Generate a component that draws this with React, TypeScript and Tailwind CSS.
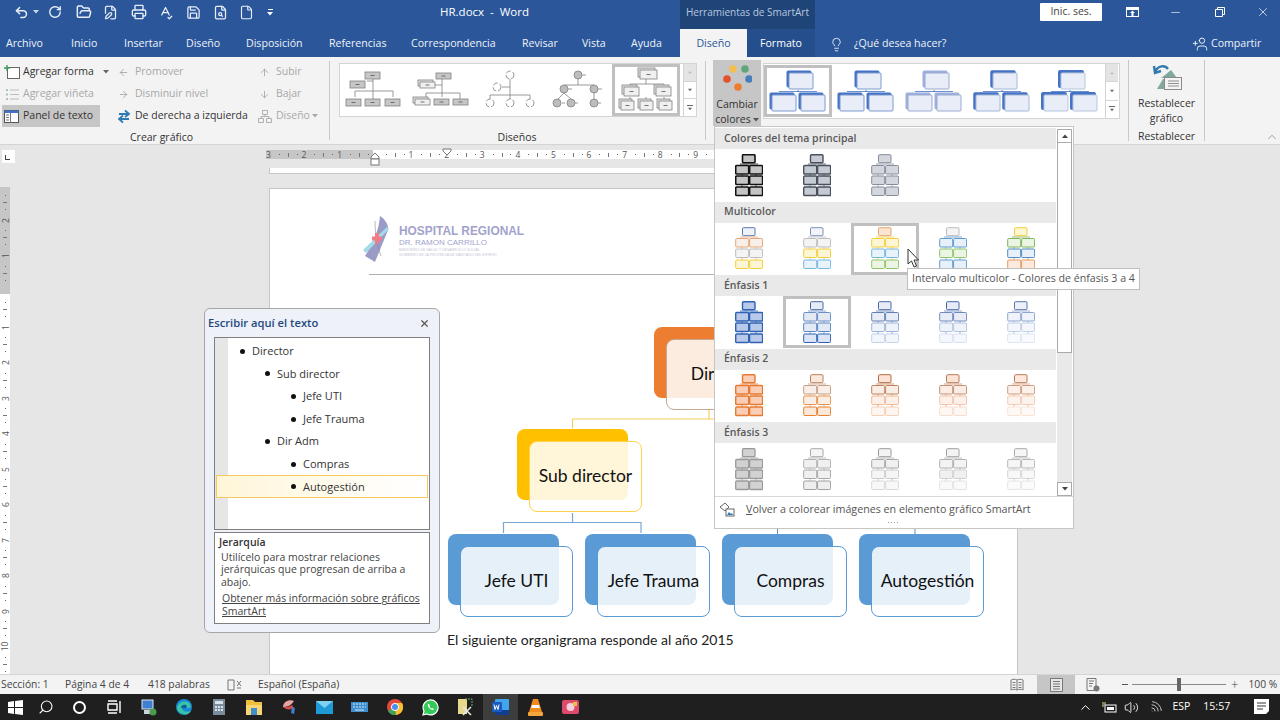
import {
  Undo2,
  RotateCcw,
  FolderOpen,
  FilePen,
  Printer,
  SpellCheck,
  Save,
  FileSearch,
  File,
  Minus,
  X,
  Lightbulb,
  UserPlus,
  ArrowLeft,
  ArrowRight,
  ArrowUp,
  ArrowDown,
  ChevronUp,
  Search,
  Volume2,
  Wifi,
} from "lucide-react";

const ui = "font-['Open_Sans','Noto_Sans',sans-serif]";

const Caret = ({ className = "" }: { className?: string }) => (
  <svg width="6" height="4" viewBox="0 0 6 4" className={className}>
    <path d="M0 0h6L3 3.500z" fill="currentColor" />
  </svg>
);

/* ---------- title bar ---------- */
const TitleBar = () => (
  <div className="h-[29px] flex items-start bg-[#2b579a] text-white shrink-0">
    <div className="w-[440px] h-[24px] flex items-center shrink-0 pl-[14px] text-[#e8eef7]">
      <Undo2 size={15} strokeWidth={2.4} />
      <Caret className="ml-[4px] text-[#c8d6ea]" />
      <RotateCcw size={14} strokeWidth={2.4} className="ml-[9px] scale-x-[-1]" />
      <FolderOpen size={16} strokeWidth={2.2} className="ml-[14px]" />
      <FilePen size={15} strokeWidth={2} className="ml-[11px]" />
      <Printer size={16} strokeWidth={2} className="ml-[13px]" />
      <SpellCheck size={15} strokeWidth={2} className="ml-[11px]" />
      <Save size={15} strokeWidth={2} className="ml-[13px]" />
      <FileSearch size={15} strokeWidth={2} className="ml-[12px]" />
      <File size={15} strokeWidth={1.8} className="ml-[11px]" />
      <div className="ml-[13px] flex flex-col items-center gap-[2px]">
        <div className="w-[5px] h-[1px] bg-white" />
        <Caret className="text-white" />
      </div>
    </div>
    <div className="w-[240px] h-[24px] flex items-center text-[11.5px] text-white shrink-0">HR.docx&nbsp; -&nbsp; Word</div>
    <div className="w-[135px] h-[29px] pb-[5px] bg-[#1f4478] text-[#b8c8de] text-[10px] flex items-center justify-center shrink-0">
      Herramientas de SmartArt
    </div>
    <div className="ml-[225px] mt-[3px] w-[62px] h-[18px] bg-white rounded-[1px] text-[#444] text-[10.500px] flex items-center justify-center">
      Inic. ses.
    </div>
    <div className="h-[24px] flex items-center">
      <svg width="13" height="10" viewBox="0 0 13 10" className="ml-[24px]">
        <rect x="0.5" y="0.5" width="12" height="9" fill="none" stroke="white" />
        <rect x="0.5" y="0.5" width="12" height="2.5" fill="white" />
        <path d="M6.500 3.500l2.500 2.500H7.500V9h-2V6H4z" fill="white" />
      </svg>
      <Minus size={13} strokeWidth={1.2} className="ml-[30px]" />
      <svg width="10" height="10" viewBox="0 0 10 10" className="ml-[33px]">
        <path d="M0.5 2.500h7v7h-7zM2.500 2.500v-2h7v7h-2" fill="none" stroke="white" />
      </svg>
      <X size={14} strokeWidth={1.2} className="ml-[31px]" />
    </div>
  </div>
);

/* ---------- tabs ---------- */
const tabs = [
  { label: "Archivo", w: "w-[65px]" },
  { label: "Inicio", w: "w-[53px]" },
  { label: "Insertar", w: "w-[62px]" },
  { label: "Diseño", w: "w-[60px]" },
  { label: "Disposición", w: "w-[83px]" },
  { label: "Referencias", w: "w-[82px]" },
  { label: "Correspondencia", w: "w-[111px]" },
  { label: "Revisar", w: "w-[60px]" },
  { label: "Vista", w: "w-[49px]" },
  { label: "Ayuda", w: "w-[49px]" },
];

const TabRow = () => (
  <div className="h-[28px] flex items-center bg-[#2b579a] text-[#eef2f8] text-[10.600px] pl-[6px] pt-[2px] shrink-0">
    {tabs.map((t) => (
      <div key={t.label} className={`${t.w} shrink-0`}>
        {t.label}
      </div>
    ))}
    <div className="w-[67px] h-[28px] -mt-[2px] pt-[2px] bg-[#f3f3f3] text-[#2b579a] flex items-center justify-center shrink-0">
      Diseño
    </div>
    <div className="w-[68px] h-[28px] -mt-[2px] pt-[2px] bg-[#254e8c] text-white flex items-center justify-center shrink-0">
      Formato
    </div>
    <Lightbulb size={15} strokeWidth={1.3} className="ml-[14px] text-white" />
    <div className="ml-[10px] w-[320px]">¿Qué desea hacer?</div>
    <UserPlus size={16} strokeWidth={1.3} className="ml-[18px] scale-x-[-1] text-white" />
    <div className="ml-[3px]">Compartir</div>
  </div>
);

/* ---------- ribbon ---------- */
const Cmd = ({
  icon,
  label,
  off,
  active,
  className = "",
}: {
  icon: React.ReactNode;
  label: string;
  off?: boolean;
  active?: boolean;
  className?: string;
}) => (
  <div
    className={`h-[22px] flex items-center whitespace-nowrap ${off ? "text-[#a8a8a8]" : "text-[#333]"} ${
      active ? "bg-[#c6c6c6]" : ""
    } ${className}`}
  >
    <div className="w-[19px] flex justify-center shrink-0">{icon}</div>
    <span className="ml-[2px]">{label}</span>
  </div>
);

const BoxG = ({ x, y, w = 15, h = 7, double }: { x: number; y: number; w?: number; h?: number; double?: boolean }) => (
  <g>
    {double && <rect x={x - 2} y={y - 2} width={w} height={h} fill="#e4e4e4" stroke="#808080" strokeWidth="0.8" />}
    <rect x={x} y={y} width={w} height={h} fill={double ? "#f0f0f0" : "#c6c6c6"} stroke="#808080" strokeWidth="0.8" />
    <path d={`M${x + w / 2 - 2} ${y + h / 2}h4`} stroke="#555" strokeWidth="0.8" />
  </g>
);

const Circ = ({ x, y, fill }: { x: number; y: number; fill?: boolean }) => (
  <circle
    cx={x}
    cy={y}
    r="4"
    fill={fill ? "#bdbdbd" : "white"}
    stroke="#8a8a8a"
    strokeWidth="0.9"
    strokeDasharray={fill ? undefined : "5 2"}
  />
);

const Layouts = [
  <svg key="1" width="60" height="46" viewBox="0 0 60 46">
    <path d="M29 10v25M29 14h-6M11 24h38M11 24v6M49 24v6" stroke="#808080" strokeWidth="0.8" fill="none" />
    <BoxG x={21} y={5} />
    <BoxG x={6} y={14} />
    <BoxG x={2} y={32} />
    <BoxG x={21} y={32} />
    <BoxG x={41} y={32} />
  </svg>,
  <svg key="2" width="60" height="46" viewBox="0 0 60 46">
    <path d="M30 10v20M30 18h-8M14 26h34M14 26v6M48 26v6" stroke="#808080" strokeWidth="0.8" fill="none" />
    <BoxG x={24} y={6} h={6} />
    <BoxG x={8} y={15} h={6} double />
    <BoxG x={3} y={32} h={6} double />
    <BoxG x={22} y={32} h={6} />
    <BoxG x={41} y={32} h={6} />
  </svg>,
  <svg key="3" width="60" height="46" viewBox="0 0 60 46">
    <path d="M30 10v24M30 20h-8M10 28h40M10 28v6M50 28v6" stroke="#808080" strokeWidth="0.8" fill="none" />
    <Circ x={30} y={8} />
    <Circ x={17} y={20} />
    <Circ x={10} y={36} />
    <Circ x={30} y={36} />
    <Circ x={50} y={36} />
  </svg>,
  <svg key="4" width="60" height="46" viewBox="0 0 60 46">
    <path d="M30 10v8M16 18h30M16 18v4M46 18v4M16 26l-6 6M16 26l7 6M46 26v6" stroke="#808080" strokeWidth="0.8" fill="none" />
    <path d="M34 8h4M20 22h4M50 22h4M14 36h3M27 36h3M50 36h3" stroke="#808080" strokeWidth="0.8" />
    <Circ x={30} y={8} fill />
    <Circ x={16} y={22} fill />
    <Circ x={46} y={22} fill />
    <Circ x={9} y={36} fill />
    <Circ x={23} y={36} fill />
    <Circ x={46} y={36} fill />
  </svg>,
  <svg key="5" width="60" height="46" viewBox="0 0 60 46">
    <path d="M30 11v6M14 17h34M14 17v4M48 17v4M14 30v3M30 30v3M48 30v3" stroke="#808080" strokeWidth="0.8" fill="none" />
    <BoxG x={24} y={3} w={17} h={9} double />
    <BoxG x={8} y={20} w={15} h={9} double />
    <BoxG x={40} y={20} w={15} h={9} double />
    <BoxG x={5} y={34} w={13} h={9} double />
    <BoxG x={24} y={34} w={13} h={9} double />
    <BoxG x={43} y={34} w={13} h={9} double />
  </svg>,
];

const ScrollBtns = ({ className = "" }: { className?: string }) => (
  <div className={`w-[13px] h-full flex flex-col border-l border-[#d4d4d4] text-[#666] ${className}`}>
    <div className="flex-1 bg-[#e4e4e4] flex items-center justify-center text-[#bdbdbd]">
      <Caret className="rotate-180 scale-75" />
    </div>
    <div className="flex-1 bg-white border-y border-[#d4d4d4] flex items-center justify-center">
      <Caret className="scale-75" />
    </div>
    <div className="flex-1 bg-white flex flex-col items-center justify-center gap-[1px]">
      <div className="w-[6px] h-[1px] bg-[#666]" />
      <Caret className="scale-75" />
    </div>
  </div>
);

const StyleThumb = ({
  back,
  front,
  bw = 1,
  selected,
}: {
  back: string;
  front: string;
  bw?: number;
  selected?: boolean;
}) => (
  <div
    className={`w-[68px] h-[52px] flex items-center justify-center shrink-0 ${
      selected ? "border-[3px] border-[#c0c0c0]" : ""
    }`}
  >
    <svg width="58" height="42" viewBox="0 0 58 42">
      <path d="M29 22v-2M10 21.500h38" stroke="#4472c4" strokeWidth="0.8" />
      {[
        [18, 1],
        [1, 23],
        [30, 23],
      ].map(([x, y]) => (
        <g key={x}>
          <rect x={x} y={y} width="24" height="16" rx="1" fill={back} stroke={back} strokeWidth={bw} />
          <rect x={x + 2} y={y + 2} width="24" height="16" rx="1" fill="#e9edf7" stroke={front} strokeWidth="1" />
        </g>
      ))}
    </svg>
  </div>
);

const Ribbon = () => (
  <div className="h-[88px] flex bg-[#f3f3f3] border-b border-[#d4d4d4] text-[10.500px] text-[#333] shrink-0">
    {/* Crear grafico */}
    <div className="w-[330px] shrink-0 flex flex-col border-r border-[#c8c8c8] my-[4px] pl-[2px]">
      <div className="flex h-[66px]">
        <div className="w-[109px] shrink-0 flex flex-col">
          <div className="flex items-center">
            <Cmd
              label="Agregar forma"
              icon={
                <svg width="16" height="14" viewBox="0 0 16 14">
                  <rect x="3.500" y="2.500" width="12" height="11" fill="white" stroke="#666" />
                  <path d="M3 0v6M0 3h6" stroke="#3e9a5c" strokeWidth="1.4" />
                </svg>
              }
            />
            <Caret className="ml-[9px] text-[#666]" />
          </div>
          <Cmd
            off
            label="Agregar viñeta"
            icon={
              <svg width="14" height="13" viewBox="0 0 14 13">
                <path d="M5 2h9M5 6.500h9M5 11h9" stroke="#bbb" />
                <path d="M1 2h2M1 6.500h2M1 11h2" stroke="#a8c8b4" strokeWidth="2" />
              </svg>
            }
          />
          <Cmd
            active
            label="Panel de texto"
            className="w-[98px]"
            icon={
              <svg width="15" height="13" viewBox="0 0 15 13">
                <rect x="0.5" y="0.5" width="14" height="12" fill="white" stroke="#555" />
                <rect x="0.5" y="0.5" width="14" height="2.500" fill="#4472c4" />
                <path d="M2 5h3M2 7.500h3M2 10h3M6.500 3v9.500" stroke="#777" />
              </svg>
            }
          />
        </div>
        <div className="w-[144px] shrink-0 flex flex-col pl-[3px]">
          <Cmd off label="Promover" icon={<ArrowLeft size={11} strokeWidth={2} />} />
          <Cmd off label="Disminuir nivel" icon={<ArrowRight size={11} strokeWidth={2} />} />
          <Cmd
            label="De derecha a izquierda"
            icon={
              <svg width="14" height="15" viewBox="0 0 14 15">
                <path d="M2 5h9M8 1.500l4 3.500-4 3" fill="none" stroke="#2f7ab0" strokeWidth="1.8" />
                <path d="M12 10H3M6 6.500L2 10l4 3.500" fill="none" stroke="#2f7ab0" strokeWidth="1.8" />
              </svg>
            }
          />
        </div>
        <div className="flex flex-col">
          <Cmd off label="Subir" icon={<ArrowUp size={11} strokeWidth={2} />} />
          <Cmd off label="Bajar" icon={<ArrowDown size={11} strokeWidth={2} />} />
          <div className="flex items-center">
            <Cmd
              off
              label="Diseño"
              icon={
                <svg width="14" height="13" viewBox="0 0 14 13">
                  <path
                    d="M4.500.5h5v4h-5zM.5 8.500h5v4h-5zM8.500 8.500h5v4h-5zM7 4.500v2M3 8.500v-2h8v2"
                    fill="none"
                    stroke="#b0b0b0"
                  />
                </svg>
              }
            />
            <Caret className="ml-[2px] text-[#aaa]" />
          </div>
        </div>
      </div>
      <div className="flex-1 text-center pr-[8px] pt-[3px]">Crear gráfico</div>
    </div>

    {/* Disenos */}
    <div className="w-[376px] shrink-0 flex flex-col border-r border-[#c8c8c8] my-[4px] pl-[9px]">
      <div className="w-[358px] h-[56px] mt-[2px] bg-white border border-[#d4d4d4] flex items-center">
        {Layouts.map((l, i) => (
          <div
            key={i}
            className={`w-[68px] h-[52px] flex items-center justify-center shrink-0 ${
              i === 4 ? "border-[3px] border-[#c0c0c0]" : ""
            }`}
          >
            {l}
          </div>
        ))}
        <ScrollBtns className="ml-[3px]" />
      </div>
      <div className="text-center pr-[10px] mt-[13px]">Diseños</div>
    </div>

    {/* Estilos */}
    <div className="w-[423px] shrink-0 flex my-[3px] pl-[7px] border-r border-[#c8c8c8]">
      <div className="w-[48px] h-[66px] bg-[#c6c6c6] flex flex-col items-center shrink-0">
        <svg width="30" height="30" viewBox="0 0 30 30" className="mt-[3px] shrink-0">
          <circle cx="11" cy="6" r="3.800" fill="#f3c04f" />
          <circle cx="23" cy="6" r="3.800" fill="#5fa77b" />
          <circle cx="5" cy="16" r="3.800" fill="#e2502c" />
          <circle cx="27" cy="16" r="3.800" fill="#4a7ebb" />
          <circle cx="16" cy="24" r="3.800" fill="#ed7d31" />
        </svg>
        <div className="leading-[15px] text-center mt-[4px] shrink-0">Cambiar</div>
        <div className="leading-[15px] flex items-center gap-[2px] shrink-0">
          colores <Caret className="text-[#555]" />
        </div>
      </div>
      <div className="w-[357px] h-[56px] mt-[3px] ml-[2px] bg-white border border-[#d4d4d4] flex items-center shrink-0">
        <StyleThumb selected back="#4472c4" front="#7c9ad0" />
        <StyleThumb back="#4472c4" front="#7c9ad0" />
        <StyleThumb back="#9dafdc" front="#9aa9cf" />
        <StyleThumb back="#4472c4" front="#a3b6d9" bw={1.500} />
        <StyleThumb back="#4472c4" front="#b6c6e0" bw={2} />
        <ScrollBtns className="ml-[1px]" />
      </div>
    </div>

    {/* Restablecer */}
    <div className="w-[76px] shrink-0 flex flex-col items-center my-[3px] border-r border-[#c8c8c8]">
      <svg width="32" height="29" viewBox="0 0 32 29" className="mt-[2px] shrink-0">
        <path d="M14 13l6-5 6 8H10z" fill="#7fa99b" />
        <path d="M6 27l6-10h10v10z" fill="#7fa99b" />
        <rect x="13.500" y="15.500" width="17" height="12" fill="#f4f4f4" stroke="#8a8a8a" />
        <path d="M17 19h11M17 21.500h11M17 24h11" stroke="#777" strokeWidth="0.8" />
        <path d="M3 4l1 7 6-2M4 10c3-7 10-7 13-3" fill="none" stroke="#2f7ab0" strokeWidth="2.400" />
      </svg>
      <div className="leading-[15px] text-center mt-[5px] shrink-0">
        Restablecer
        <br />
        gráfico
      </div>
      <div className="mt-[3px] leading-[15px] shrink-0">Restablecer</div>
    </div>
    <div className="flex-1 flex items-end justify-end pr-[1px]">
      <ChevronUp size={14} strokeWidth={1} className="text-[#666]" />
    </div>
  </div>
);

/* ---------- rulers ---------- */
const RulerUnit = ({ n }: { n?: number }) => (
  <div className="w-[35.600px] shrink-0 flex items-center justify-between pr-[4px]">
    <span className="w-[5px] leading-[9px]">{n}</span>
    <span className="w-[1px] h-[1px] bg-[#666]" />
    <span className="w-[1px] h-[4px] bg-[#777]" />
    <span className="w-[1px] h-[1px] bg-[#666]" />
  </div>
);

const Ruler = () => (
  <div className="h-[23px] flex items-start pt-[5px] shrink-0 relative text-[8.500px] text-[#555]">
    <div className="w-[13px] h-[13px] ml-[2px] bg-white flex items-end pb-[3px] pl-[3px] shrink-0">
      <div className="w-[5px] h-[5px] border-l border-b border-[#444]" />
    </div>
    <div className="ml-[251px] flex h-[9px] items-center">
      <div className="w-[107px] h-full bg-[#c6c6c6] flex items-center">
        {[3, 2, 1].map((n) => (
          <RulerUnit key={n} n={n} />
        ))}
      </div>
      <div className="w-[342px] h-full bg-white flex items-center overflow-hidden">
        <RulerUnit />
        {[1, 2, 3, 4, 5, 6, 7, 8, 9].map((n) => (
          <RulerUnit key={n} n={n} />
        ))}
      </div>
    </div>
    {/* margin markers */}
    <svg width="12" height="20" viewBox="0 0 12 20" className="absolute left-[369px] top-[4px]">
      <path d="M2 8l4-4 4 4v2H2z" fill="white" stroke="#777" />
      <rect x="2" y="10" width="8" height="6" fill="white" stroke="#777" />
    </svg>
    <svg width="12" height="9" viewBox="0 0 12 9" className="absolute left-[441px] top-[3px]">
      <path d="M2 1h8v2L6 7 2 3z" fill="white" stroke="#777" />
    </svg>
  </div>
);

const VUnit = ({ n }: { n?: number }) => (
  <div className="h-[35.500px] shrink-0 flex flex-col items-center justify-around">
    <span className="w-[1px] h-[1px] bg-[#666]" />
    <span className="w-[4px] h-[1px] bg-[#777]" />
    <span className="w-[1px] h-[1px] bg-[#666]" />
    <span className="-rotate-90 h-[9px] leading-[9px]">{n}</span>
  </div>
);

const VRuler = () => (
  <div className="w-[10px] shrink-0 flex flex-col pt-[19px] text-[8.500px] text-[#555]">
    <div className="h-[107px] shrink-0 bg-[#c6c6c6] flex flex-col pt-[5px] overflow-hidden">
      <VUnit n={2} />
      <VUnit n={1} />
      <VUnit />
    </div>
    <div className="flex-1 bg-white flex flex-col pt-[5px] overflow-hidden">
      {[1, 2, 3, 4, 5, 6, 7, 8, 9, 10].map((n) => (
        <VUnit key={n} n={n} />
      ))}
      <VUnit />
    </div>
  </div>
);

/* ---------- org chart nodes (positions on the page are the diagram itself) ---------- */
const Node = ({
  label,
  left,
  top,
  back,
  border,
}: {
  label: string;
  left: string;
  top: string;
  back: string;
  border: string;
}) => (
  <div className={`absolute ${left} ${top} w-[125px] h-[83px]`}>
    <div className={`absolute left-0 top-0 w-[111px] h-[71px] rounded-[8px] ${back}`} />
    <div
      className={`absolute left-[12px] top-[12px] w-[113px] h-[71px] pb-[1px] rounded-[8px] border ${border} bg-white/85 flex items-center justify-center font-['Lato',sans-serif] text-[17.500px] text-[#111]`}
    >
      {label}
    </div>
  </div>
);

const Page = () => (
  <div className="flex-1 bg-white border-x border-t border-[#c6c6c6] relative overflow-hidden">
    {/* logo header */}
    <div className="flex items-center pl-[93px] pt-[27px]">
      <svg width="28" height="46" viewBox="0 0 28 46">
        <path d="M17 0c6 4 9 10 8 14L12 46 2 40c8-12 14-26 15-40z" fill="#9b9bc8" />
        <path d="M0 34L24 11l2 2L3 37z" fill="#a3dbe6" />
        <path d="M12 5c0 10 2 25 6 35" stroke="#8a8a8a" strokeWidth="0.6" fill="none" />
        <path d="M14 17v11M9 22.500h10" stroke="#ef7c86" strokeWidth="4" />
      </svg>
      <div className="ml-[8px] mt-[4px] flex flex-col text-[#a2a3cc] font-['Liberation_Sans',sans-serif]">
        <div className="text-[11.900px] font-bold leading-[13px] whitespace-nowrap">HOSPITAL REGIONAL</div>
        <div className="text-[8px] leading-[9px] whitespace-nowrap">DR. RAMON CARRILLO</div>
        <div className="text-[3.500px] leading-[5px] mt-[1px] text-[#c4c4d8] whitespace-nowrap">
          MINISTERIO DE SALUD Y DESARROLLO SOCIAL
        </div>
        <div className="text-[3.500px] leading-[5px] text-[#c4c4d8] whitespace-nowrap">
          GOBIERNO DE LA PROVINCIA DE SANTIAGO DEL ESTERO
        </div>
      </div>
    </div>
    <div className="ml-[99px] mr-[40px] mt-[12px] h-[1px] bg-[#b0b0b0]" />

    {/* connectors */}
    <svg width="748" height="360" viewBox="0 0 748 360" className="absolute -left-[1px] top-[129px]">
      <path d="M440 90.500v10M303.500 110.500v-9.500H520" fill="none" stroke="#f5cf5a" strokeWidth="1.200" />
      <path d="M303.500 195v9.500M234.500 215v-10.500H372V215" fill="none" stroke="#7ba7d0" strokeWidth="1.200" />
      <path d="M508.500 209v7M646 209v7" fill="none" stroke="#5a8fc0" strokeWidth="1" />
    </svg>

    <Node label="Director" left="left-[384px]" top="top-[138px]" back="bg-[#ed7d31]" border="border-[#c8a78f]" />
    <Node label="Sub director" left="left-[247px]" top="top-[240px]" back="bg-[#ffc000]" border="border-[#ffd34d]" />
    <Node label="Jefe UTI" left="left-[178px]" top="top-[345px]" back="bg-[#5b9bd5]" border="border-[#5b9bd5]" />
    <Node label="Jefe Trauma" left="left-[315px]" top="top-[345px]" back="bg-[#5b9bd5]" border="border-[#5b9bd5]" />
    <Node label="Compras" left="left-[452px]" top="top-[345px]" back="bg-[#5b9bd5]" border="border-[#5b9bd5]" />
    <Node label="Autogestión" left="left-[589px]" top="top-[345px]" back="bg-[#5b9bd5]" border="border-[#5b9bd5]" />

    <div className="absolute left-[177px] top-[440px] font-['Lato',sans-serif] text-[14px] text-[#222] whitespace-nowrap">
      El siguiente organigrama responde al año 2015
    </div>
  </div>
);

/* ---------- text pane ---------- */
const paneItems = [
  { t: "Director", bullet: "pl-[25px]" },
  { t: "Sub director", bullet: "pl-[50px]" },
  { t: "Jefe UTI", bullet: "pl-[76px]" },
  { t: "Jefe Trauma", bullet: "pl-[76px]" },
  { t: "Dir Adm", bullet: "pl-[50px]" },
  { t: "Compras", bullet: "pl-[76px]" },
  { t: "Autogestión", bullet: "pl-[76px]" },
];

const TextPane = () => (
  <div
    className={`absolute left-[204px] top-[308px] w-[236px] h-[325px] bg-[#eef1f7] border border-[#a6a6a6] rounded-[6px] flex flex-col px-[9px] ${ui} text-[11px]`}
  >
    <div className="h-[28px] shrink-0 flex items-center justify-between -ml-[6px]">
      <span className="text-[#1f497d] text-[11.200px] font-semibold">Escribir aquí el texto</span>
      <X size={11} strokeWidth={2.600} className="text-[#555]" />
    </div>
    <div className="h-[193px] shrink-0 border border-[#7f7f7f] bg-white flex relative">
      <div className="absolute left-[1px] right-[1px] top-[137px] h-[23px] bg-gradient-to-r from-[#fff6d8] to-white border border-[#f5c860]" />
      <div className="w-[13px] bg-[#e6e6e6] shrink-0" />
      <div className="flex-1 flex flex-col pt-[2px] relative">
        {paneItems.map((p) => (
          <div key={p.t} className={`h-[22.600px] flex items-center ${p.bullet} text-[#333] -ml-[13px]`}>
            <span className="w-[5px] h-[5px] rounded-full bg-[#111] shrink-0" />
            <span className="ml-[7px]">{p.t}</span>
          </div>
        ))}
      </div>
    </div>
    <div className="h-[92px] mt-[2px] shrink-0 border border-[#7f7f7f] bg-white px-[4px] pt-[3px] text-[10.500px] text-[#444] leading-[12.600px]">
      <div className="font-semibold text-[#333]">Jerarquía</div>
      <div className="pl-[2px] mt-[2px]">
        Utilícelo para mostrar relaciones jerárquicas que progresan de arriba a abajo.
      </div>
      <div className="pl-[3px] mt-[4px] underline">Obtener más información sobre gráficos SmartArt</div>
    </div>
  </div>
);

/* ---------- color dropdown ---------- */
type Ramp = [string, string][];

const Thumb = ({ ramp, w = 1 }: { ramp: Ramp; w?: number }) => {
  const rows = [11.500, 22, 33];
  return (
    <svg width="28" height="43" viewBox="0 0 28 43">
      <path d="M7 20v2M21 20v2M7 31v2M21 31v2" stroke={ramp[1][0]} strokeWidth="0.7" />
      <rect x="7.500" y="0.7" width="12.500" height="8" rx="1" fill={ramp[0][1]} stroke={ramp[0][0]} strokeWidth={w} />
      <path d="M5 10h18" stroke={ramp[1][0]} strokeWidth="0.8" />
      {rows.map((y, i) => (
        <g key={y}>
          <rect x="0.7" y={y} width="13" height="8.500" rx="1" fill={ramp[i + 1][1]} stroke={ramp[i + 1][0]} strokeWidth={w} />
          <rect x="14.600" y={y} width="13" height="8.500" rx="1" fill={ramp[i + 1][1]} stroke={ramp[i + 1][0]} strokeWidth={w} />
        </g>
      ))}
    </svg>
  );
};

const same = (s: string, f: string): Ramp => [
  [s, f],
  [s, f],
  [s, f],
  [s, f],
];

const sections: { title: string; thumbs: { ramp: Ramp; w?: number }[]; sel?: number }[] = [
  {
    title: "Colores del tema principal",
    thumbs: [
      { ramp: same("#111111", "#c4c4c4"), w: 1.600 },
      { ramp: same("#47505c", "#c6cbd3"), w: 1.400 },
      { ramp: same("#848d9c", "#d3d7dd") },
    ],
  },
  {
    title: "Multicolor",
    sel: 2,
    thumbs: [
      { ramp: [["#5578b5", "#eef1f8"], ["#e5a577", "#f8efe8"], ["#bcbcbc", "#f4f4f4"], ["#f2cd3a", "#fdf6d4"]] },
      { ramp: [["#7a8fb8", "#f2f4f9"], ["#bcbcbc", "#f4f4f4"], ["#f2cd3a", "#fdf6d4"], ["#75b6df", "#e8f3fb"]] },
      { ramp: [["#e4a66e", "#fae4d2"], ["#f2cd3a", "#fdf6d4"], ["#75b6df", "#e8f3fb"], ["#8fc46a", "#ecf5e3"]] },
      { ramp: [["#bcbcbc", "#f4f4f4"], ["#5d9bd0", "#e8f1f9"], ["#8fc46a", "#ecf5e3"], ["#5d9bd0", "#e8f1f9"]] },
      { ramp: [["#f2cd3a", "#fdf6d4"], ["#7fb35c", "#ecf5e3"], ["#4f8bc4", "#e8f1f9"], ["#ec9a5e", "#fbeadd"]] },
    ],
  },
  {
    title: "Énfasis 1",
    sel: 1,
    thumbs: [
      { ramp: same("#2f62b3", "#b9c9ea"), w: 1.400 },
      { ramp: [["#4668a8", "#e7ebf5"], ["#6b8ec6", "#e3e8f3"], ["#5a86c4", "#e3eaf6"], ["#2f62b3", "#dbe5f5"]] },
      { ramp: [["#4668a8", "#e7ebf5"], ["#5e7fb8", "#e8ecf6"], ["#9eb4da", "#eef2f9"], ["#c3d1ea", "#f3f6fb"]] },
      { ramp: [["#4668a8", "#e7ebf5"], ["#6e8abd", "#e8ecf6"], ["#b3c4e2", "#eef2f9"], ["#d6e0f1", "#f5f7fc"]] },
      { ramp: [["#5874ac", "#edf0f8"], ["#8ea5cf", "#f0f3f9"], ["#c0cfe8", "#f4f6fb"], ["#dde6f4", "#f8fafd"]] },
    ],
  },
  {
    title: "Énfasis 2",
    thumbs: [
      { ramp: same("#e67a30", "#f9cdb6"), w: 1.400 },
      { ramp: [["#b8805c", "#fbe7dc"], ["#c79f86", "#f8efe9"], ["#e8924f", "#fbefe5"], ["#e8802f", "#fbe8d9"]] },
      { ramp: [["#b46a3e", "#fbe3d6"], ["#c0835c", "#f9ede5"], ["#efb996", "#fcf0e8"], ["#f5cfb6", "#fdf5ef"]] },
      { ramp: [["#b87a55", "#fbe3d6"], ["#c6906e", "#f9ede5"], ["#f2c5a9", "#fcf0e8"], ["#f8dccb", "#fef8f4"]] },
      { ramp: [["#b87a55", "#fce8dc"], ["#d09c7c", "#fbf0ea"], ["#f5ccb3", "#fdf3ed"], ["#fae2d3", "#fef9f6"]] },
    ],
  },
  {
    title: "Énfasis 3",
    thumbs: [
      { ramp: same("#9a9a9a", "#d2d2d2"), w: 1.300 },
      { ramp: [["#a8a8a8", "#f5f5f5"], ["#b0b0b0", "#f0f0f0"], ["#a8a8a8", "#f0f0f0"], ["#a0a0a0", "#eeeeee"]] },
      { ramp: [["#9a9a9a", "#f3f3f3"], ["#a8a8a8", "#f0f0f0"], ["#cccccc", "#f5f5f5"], ["#d8d8d8", "#f8f8f8"]] },
      { ramp: [["#a0a0a0", "#f3f3f3"], ["#b0b0b0", "#f3f3f3"], ["#d0d0d0", "#f0f0f0"], ["#e2e2e2", "#f9f9f9"]] },
      { ramp: [["#a8a8a8", "#f6f6f6"], ["#b8b8b8", "#f6f6f6"], ["#d4d4d4", "#f8f8f8"], ["#e6e6e6", "#fbfbfb"]] },
    ],
  },
];

const ColorMenu = () => (
  <div className={`absolute left-[714px] top-[126px] w-[360px] h-[403px] bg-white border border-[#c6c6c6] flex flex-col ${ui}`}>
    <div className="flex h-[369px] shrink-0">
      <div className="w-[341px] shrink-0 pt-[1px] overflow-hidden">
        {sections.map((s) => (
          <div key={s.title} className="h-[73.500px]">
            <div className="h-[21px] bg-[#e9e9e9] text-[#595959] text-[10.500px] font-semibold flex items-center pl-[9px]">
              {s.title}
            </div>
            <div className="flex">
              {s.thumbs.map((t, i) => (
                <div
                  key={i}
                  className={`w-[68px] h-[52px] flex items-center justify-center shrink-0 ${
                    s.sel === i ? "border-[3px] border-[#c0c0c0]" : ""
                  }`}
                >
                  <Thumb ramp={t.ramp} w={t.w} />
                </div>
              ))}
            </div>
          </div>
        ))}
      </div>
      <div className="w-[15px] ml-[1px] flex flex-col shrink-0 mt-[2px] bg-[#e9e9e9]">
        <div className="h-[14px] bg-white border border-[#aaa] flex items-center justify-center text-[#444]">
          <Caret className="rotate-180" />
        </div>
        <div className="h-[210px] bg-white border-x border-b border-[#aaa]" />
        <div className="flex-1" />
        <div className="h-[14px] bg-white border border-[#aaa] flex items-center justify-center text-[#444]">
          <Caret />
        </div>
      </div>
    </div>
    <div className="flex-1 border-t border-[#d8d8d8] flex flex-col">
      <div className="h-[25px] flex items-center pl-[4px] text-[#555] text-[10.700px]">
        <svg width="16" height="15" viewBox="0 0 16 15">
          <path d="M1 5l5-4 4 4-4 4z" fill="#fff" stroke="#666" />
          <rect x="7" y="7" width="8" height="7" fill="white" stroke="#666" />
          <path d="M8 13l2-3 2 2 1-1 1 2z" fill="#2f7ab0" />
        </svg>
        <span className="ml-[11px]">
          <span className="underline">V</span>olver a colorear imágenes en elemento gráfico SmartArt
        </span>
      </div>
      <div className="flex justify-center gap-[2px] pr-[2px]">
        {[0, 1, 2, 3].map((i) => (
          <span key={i} className="w-[1px] h-[1px] bg-[#999]" />
        ))}
      </div>
    </div>
  </div>
);

/* ---------- status bar ---------- */
const StatusBar = () => (
  <div className="h-[20px] flex items-center bg-[#f3f3f3] border-t border-[#d4d4d4] text-[10.300px] text-[#444] shrink-0">
    <span className="w-[65px] pl-[1px] shrink-0">Sección: 1</span>
    <span className="w-[83px] shrink-0">Página 4 de 4</span>
    <span className="w-[79px] shrink-0">418 palabras</span>
    <svg width="15" height="12" viewBox="0 0 15 12" className="shrink-0">
      <path d="M7 1H1v10h6M7 1v10" fill="none" stroke="#777" />
      <path d="M10 2l4 5M14 2l-4 5M10 9h4" fill="none" stroke="#777" />
    </svg>
    <span className="ml-[16px] w-[120px] shrink-0">Español (España)</span>
    <div className="ml-[632px] flex items-center h-full">
      <svg width="14" height="14" viewBox="0 0 14 14">
        <path d="M7 2C5 1 3 1 1 2v10c2-1 4-1 6 0 2-1 4-1 6 0V2c-2-1-4-1-6 0zM7 2v10M2.500 4.500h3M2.500 7h3M2.500 9.500h3M8.500 4.500h3M8.500 7h3M8.500 9.500h3" fill="none" stroke="#777" />
      </svg>
      <div className="ml-[13px] w-[38px] h-full bg-[#c6c6c6] flex items-center justify-center">
        <svg width="13" height="14" viewBox="0 0 13 14">
          <path d="M.5.5h12v13H.5zM3 3.500h7M3 6h7M3 8.500h7M3 11h7" fill="#e8e8e8" stroke="#777" />
        </svg>
      </div>
      <svg width="14" height="14" viewBox="0 0 14 14" className="ml-[11px]">
        <path d="M1 .5h9v12H1zM3 3h5M3 5.500h4M3 8h3" fill="none" stroke="#777" />
        <circle cx="10.500" cy="10.500" r="3" fill="#777" />
      </svg>
      <div className="ml-[22px] w-[6px] h-[1px] bg-[#555]" />
      <div className="ml-[4px] w-[94px] h-[1px] bg-[#888] relative">
        <div className="absolute left-[45px] -top-[6px] w-[4px] h-[13px] bg-[#666]" />
      </div>
      <div className="ml-[5px] text-[13px] font-light leading-none">+</div>
      <span className="ml-[10px] whitespace-nowrap">100 %</span>
    </div>
  </div>
);

/* ---------- taskbar ---------- */
const taskIcons: { w: string; el: React.ReactNode; on?: boolean }[] = [
  {
    w: "w-[30px]",
    el: (
      <svg width="15" height="15" viewBox="0 0 15 15">
        <path d="M0 2l6-1v6H0zM7 1l8-1v7H7zM0 8h6v6l-6-1zM7 8h8v7l-8-1z" fill="white" />
      </svg>
    ),
  },
  { w: "w-[32px]", el: <Search size={16} strokeWidth={1.600} className="text-white scale-x-[-1]" /> },
  { w: "w-[35px]", el: <div className="w-[13px] h-[13px] rounded-full border-[2px] border-white" /> },
  {
    w: "w-[34px]",
    el: (
      <svg width="15" height="14" viewBox="0 0 15 14">
        <path d="M1 1h9M1 13h9M1 4h9v6H1zM13 1v12" fill="none" stroke="white" strokeWidth="1.400" />
      </svg>
    ),
  },
  {
    w: "w-[35.200px]",
    el: (
      <svg width="16" height="17" viewBox="0 0 16 17">
        <rect x="1" y="1" width="11" height="9" fill="#3f7fcf" stroke="#dfe6ef" />
        <rect x="3" y="11" width="8" height="4" fill="#c9d3de" />
        <circle cx="12" cy="13" r="3.500" fill="#4c9a4c" />
      </svg>
    ),
  },
  {
    w: "w-[35.200px]",
    el: (
      <svg width="16" height="16" viewBox="0 0 16 16">
        <circle cx="8" cy="8" r="8" fill="#1b88d6" />
        <path d="M1 9c1-6 8-8 12-5 2 2 2 5 0 5H6c0 3 4 5 9 3-2 3-5 4-8 3-4-1-6-3-6-6z" fill="#37c5a4" />
        <path d="M5 9c0-3 3-4 5-3 1 1 1 2 0 3z" fill="#0e5b9e" />
      </svg>
    ),
  },
  {
    w: "w-[35.200px]",
    el: (
      <svg width="12" height="16" viewBox="0 0 12 16">
        <rect width="12" height="16" fill="#7a8b9c" />
        <rect x="2" y="2" width="8" height="3" fill="#dbe3ea" />
        <path d="M2 7h2v2H2zM5 7h2v2H5zM8 7h2v2H8zM2 10h2v2H2zM5 10h2v2H5zM8 10h2v2H8z" fill="#dbe3ea" />
      </svg>
    ),
  },
  {
    w: "w-[35.200px]",
    el: (
      <svg width="16" height="15" viewBox="0 0 16 15">
        <path d="M0 0h7l2 2h7v13H0z" fill="#f0bf3f" />
        <path d="M0 5h16v10H0z" fill="#f7d774" />
        <rect x="5" y="8" width="6" height="7" fill="#3f8fd0" />
      </svg>
    ),
  },
  {
    w: "w-[35.200px]",
    el: (
      <svg width="17" height="16" viewBox="0 0 17 16">
        <path d="M2 8c0-5 6-8 11-6-2 3-5 6-11 6z" fill="#e9a3a3" />
        <path d="M2 8c3 0 6 0 9-2l2 3c-3 2-8 2-11-1z" fill="#d94a4a" />
        <path d="M11 8l3 1-1 6-3-1z" fill="#3f7fcf" />
      </svg>
    ),
  },
  {
    w: "w-[35.200px]",
    el: (
      <svg width="17" height="13" viewBox="0 0 17 13">
        <rect width="17" height="13" fill="#1e9ad6" />
        <path d="M0 0l8.500 7L17 0z" fill="#7fd0f2" />
      </svg>
    ),
  },
  {
    w: "w-[35.200px]",
    el: (
      <svg width="17" height="10" viewBox="0 0 17 10">
        <rect width="17" height="10" fill="#3f8fcf" />
        <path d="M2 2h2M5 2h2M8 2h2M11 2h2M14 2h1M2 5h2M5 5h2M8 5h2M11 5h2M14 5h1M4 8h9" stroke="#cde6f7" />
      </svg>
    ),
  },
  {
    w: "w-[35.200px]",
    el: (
      <svg width="16" height="16" viewBox="0 0 16 16">
        <circle cx="8" cy="8" r="8" fill="#e2483c" />
        <path d="M8 8L1 12a8 8 0 0 0 8 4z" fill="#3aa757" />
        <path d="M8 8l1 8a8 8 0 0 0 6-12H8z" fill="#f9c02e" />
        <circle cx="8" cy="8" r="3.600" fill="#4a8cf0" stroke="white" />
      </svg>
    ),
  },
  {
    w: "w-[35.200px]",
    el: (
      <svg width="17" height="17" viewBox="0 0 17 17">
        <path d="M1 16l1-4a7.500 7.500 0 1 1 3 3z" fill="#35c95a" stroke="white" strokeWidth="1.200" />
        <path d="M6 5c-1 2 2 6 5 6l1-1-2-1-1 .5L7.500 8l.5-1-1-2z" fill="white" />
      </svg>
    ),
  },
  {
    w: "w-[35.200px]",
    el: (
      <svg width="16" height="18" viewBox="0 0 16 18">
        <rect x="1" y="1" width="9" height="15" fill="#e8d88c" />
        <path d="M8 1h7v7" fill="none" stroke="#6bb06b" strokeDasharray="2 1" />
        <path d="M6 9l8 8M14 9l-8 8" stroke="#e8e8e8" strokeWidth="1.600" />
      </svg>
    ),
  },
  {
    w: "w-[35.200px]",
    on: true,
    el: (
      <svg width="17" height="16" viewBox="0 0 17 16">
        <rect x="3" width="14" height="16" rx="1" fill="#41a5ee" />
        <rect x="3" y="11" width="14" height="5" fill="#103f91" />
        <rect y="3" width="10" height="10" rx="1" fill="#185abd" />
        <path d="M2 5.500l1 5 1.500-4 1.500 4 1-5" fill="none" stroke="white" />
      </svg>
    ),
  },
  {
    w: "w-[35.200px]",
    el: (
      <svg width="15" height="18" viewBox="0 0 15 18">
        <path d="M5 1h5l4 13H1z" fill="#f08a1d" />
        <path d="M4 7h7l1 3H3z" fill="#f4f4f4" />
        <rect y="14" width="15" height="4" rx="1" fill="#f5a53a" />
      </svg>
    ),
  },
  {
    w: "w-[35.200px]",
    el: (
      <svg width="17" height="14" viewBox="0 0 17 14">
        <rect width="17" height="14" rx="2" fill="#e04a6a" />
        <circle cx="8.500" cy="7" r="4" fill="#f5d0dc" />
        <rect x="11" y="2" width="4" height="4" fill="#e8c24a" />
      </svg>
    ),
  },
];

const Taskbar = () => (
  <div className={`h-[26px] bg-[#1f1f1f] flex items-center text-white text-[11px] shrink-0 ${ui}`}>
    {taskIcons.map((t, i) => (
      <div key={i} className={`${t.w} h-full flex items-center justify-center shrink-0 ${t.on ? "bg-[#3d3d3d]" : ""}`}>
        {t.el}
      </div>
    ))}
    <div className="ml-[490px] flex items-center">
      <ChevronUp size={15} strokeWidth={1.600} />
      <svg width="15" height="11" viewBox="0 0 15 11" className="ml-[9px]">
        <rect x="3" y="3" width="11" height="7" fill="none" stroke="white" />
        <rect x="5" y="5" width="7" height="3" fill="white" />
        <path d="M1 0v5M3 0v3" stroke="#e8d88c" />
      </svg>
      <Volume2 size={15} strokeWidth={1.400} className="ml-[7px]" />
      <Wifi size={15} strokeWidth={1.400} className="ml-[9px] text-[#cfcfcf] rotate-45" />
      <span className="ml-[9px] text-[10.500px]">ESP</span>
      <span className="ml-[13px] text-[10.500px]">15:57</span>
      <svg width="15" height="16" viewBox="0 0 15 16" className="ml-[24px]">
        <path d="M0 0h15v12l-3 3H0z" fill="white" />
        <path d="M3 4h9M3 7h9M3 10h6" stroke="#333" />
      </svg>
    </div>
  </div>
);

export default function App() {
  return (
    <div className={`relative w-[1280px] h-[720px] overflow-hidden flex flex-col ${ui}`}>
      <TitleBar />
      <TabRow />
      <Ribbon />
      <div className="flex-1 flex flex-col bg-[#e6e6e6] min-h-0 relative">
        <Ruler />
        <div className="flex-1 flex min-h-0">
          <VRuler />
          <div className="ml-[259px] w-[749px] flex flex-col shrink-0">
            <div className="h-[6px] bg-white border-x border-b border-[#c6c6c6] shrink-0" />
            <div className="h-[14px] shrink-0" />
            <Page />
          </div>
        </div>
      </div>
      <StatusBar />
      <Taskbar />

      <TextPane />
      <ColorMenu />

      {/* tooltip */}
      <div className="absolute left-[907px] top-[268px] w-[233px] h-[22px] bg-white border border-[#bebebe] text-[10.650px] text-[#555] flex items-center pl-[4px] whitespace-nowrap">
        Intervalo multicolor - Colores de énfasis 3 a 4
      </div>
      {/* mouse pointer */}
      <svg width="13" height="20" viewBox="0 0 13 20" className="absolute left-[907px] top-[248px]">
        <path d="M1 1v15l3.500-3 2.500 6 2.500-1-2.500-6h4.500z" fill="white" stroke="#333" strokeWidth="1" />
      </svg>
    </div>
  );
}
